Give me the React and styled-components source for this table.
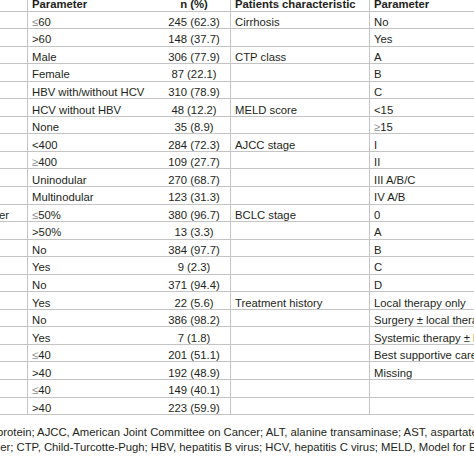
import React from "react";
import styled, { createGlobalStyle } from "styled-components";

const GlobalStyle = createGlobalStyle`
  html, body {
    margin: 0;
    padding: 0;
    background: #ffffff;
  }
  body {
    font-family: "Liberation Sans", Arial, sans-serif;
    color: #231f20;
  }
`;

const Page = styled.div`
  width: 474px;
  height: 474px;
  overflow: hidden;
  background: #ffffff;
  display: flow-root;
`;

const Sheet = styled.div`
  margin-top: -6px;
  margin-left: -105px;
  width: 760px;
`;

const Table = styled.div`
  display: grid;
  grid-template-columns: 132px 130px 73px 139px 160px 86px;
  grid-auto-rows: 17.56px;
  font-size: 11.3px;
`;

const Cell = styled.div`
  box-sizing: border-box;
  display: flex;
  align-items: center;
  justify-content: ${(p) => (p.$center ? "center" : "flex-start")};
  padding: 4px 3px 0 4px;
  border-bottom: 1px solid #c4c4c4;
  border-left: ${(p) => (p.$line ? "1px solid #c4c4c4" : "none")};
  font-weight: ${(p) => (p.$head ? "bold" : "normal")};
  white-space: nowrap;
  overflow: hidden;
`;

const Le = styled.span`
  color: #8c8c8c;
`;

const Notes = styled.div`
  margin-top: 10px;
  margin-left: 105px;
  font-size: 11.3px;
  line-height: 15px;
`;

const NoteLine = styled.div`
  white-space: nowrap;
  margin-left: ${(p) => p.$shift || 0}px;
`;

const sym = (s) => {
  if (s.startsWith("≤") || s.startsWith("≥")) {
    return (
      <span>
        <Le>{s[0]}</Le>
        {s.slice(1)}
      </span>
    );
  }
  return s;
};

const rows = [
  ["Age", "≤60", "245 (62.3)", "Cirrhosis", "No"],
  ["", ">60", "148 (37.7)", "", "Yes"],
  ["Gender", "Male", "306 (77.9)", "CTP class", "A"],
  ["", "Female", "87 (22.1)", "", "B"],
  ["Etiology", "HBV with/without HCV", "310 (78.9)", "", "C"],
  ["", "HCV without HBV", "48 (12.2)", "MELD score", "<15"],
  ["", "None", "35 (8.9)", "", "≥15"],
  ["AFP (ng/ml)", "<400", "284 (72.3)", "AJCC stage", "I"],
  ["", "≥400", "109 (27.7)", "", "II"],
  ["Tumor number", "Uninodular", "270 (68.7)", "", "III A/B/C"],
  ["", "Multinodular", "123 (31.3)", "", "IV A/B"],
  ["Tumor occupying liver", "≤50%", "380 (96.7)", "BCLC stage", "0"],
  ["", ">50%", "13 (3.3)", "", "A"],
  ["PVTT", "No", "384 (97.7)", "", "B"],
  ["", "Yes", "9 (2.3)", "", "C"],
  ["Diabetes", "No", "371 (94.4)", "", "D"],
  ["", "Yes", "22 (5.6)", "Treatment history", "Local therapy only"],
  ["Hypertension", "No", "386 (98.2)", "", "Surgery ± local therapy"],
  ["", "Yes", "7 (1.8)", "", "Systemic therapy ± local therapy"],
  ["ALT (U/L)", "≤40", "201 (51.1)", "", "Best supportive care"],
  ["", ">40", "192 (48.9)", "", "Missing"],
  ["AST (U/L)", "≤40", "149 (40.1)", "", ""],
  ["", ">40", "223 (59.9)", "", ""],
];

export default function App() {
  return (
    <Page>
      <GlobalStyle />
      <Sheet>
        <Table>
          <Cell $head></Cell>
          <Cell $head $line>Parameter</Cell>
          <Cell $head $center>n (%)</Cell>
          <Cell $head $line>Patients characteristic</Cell>
          <Cell $head $line>Parameter</Cell>
          <Cell $head $center>n (%)</Cell>
          {rows.map((r, i) => (
            <React.Fragment key={i}>
              <Cell>{r[0]}</Cell>
              <Cell $line>{sym(r[1])}</Cell>
              <Cell $center>{r[2]}</Cell>
              <Cell $line>{r[3]}</Cell>
              <Cell $line>{sym(r[4])}</Cell>
              <Cell $center></Cell>
            </React.Fragment>
          ))}
        </Table>
        <Notes>
          <NoteLine $shift={-59}>
            AFP, α-fetoprotein; AJCC, American Joint Committee on Cancer; ALT, alanine transaminase; AST, aspartate aminotransferase;
          </NoteLine>
          <NoteLine $shift={-175}>
            BCLC, Barcelona Clinic Liver Cancer; CTP, Child-Turcotte-Pugh; HBV, hepatitis B virus; HCV, hepatitis C virus; MELD, Model for End-Stage Liver Disease.
          </NoteLine>
        </Notes>
      </Sheet>
    </Page>
  );
}
